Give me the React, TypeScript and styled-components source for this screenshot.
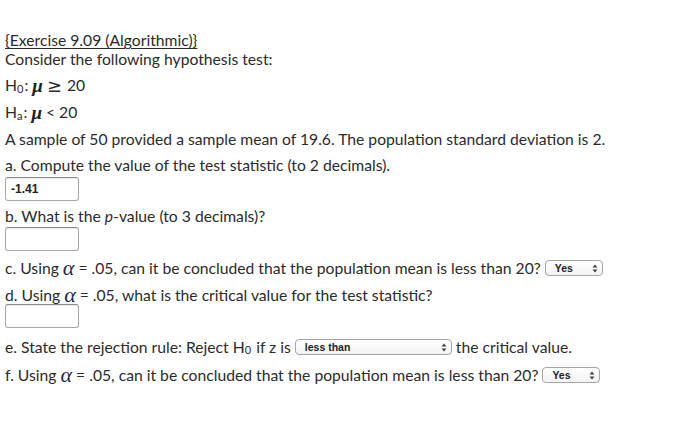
import React from "react";
import styled, { createGlobalStyle } from "styled-components";

const GlobalStyle = createGlobalStyle`
  html, body {
    margin: 0;
    padding: 0;
    background: #ffffff;
  }
`;

const Page = styled.div`
  padding: 31px 0 0 5px;
  font-family: Lato, "Liberation Sans", sans-serif;
  font-size: 15.7px;
  color: #2b2b2b;
  width: 676px;
`;

const Title = styled.div`
  line-height: 19px;
  text-decoration: underline;
  text-underline-offset: 2px;
  text-decoration-thickness: 1px;
`;

const Line = styled.div<{ $h: number; $mt?: number }>`
  height: ${(p) => p.$h}px;
  line-height: ${(p) => p.$h}px;
  margin-top: ${(p) => p.$mt ?? 0}px;
  display: flex;
  align-items: center;
  white-space: nowrap;
`;

const Sub = styled.span`
  font-size: 11px;
  position: relative;
  top: 3px;
  margin-right: 1px;
`;

const Greek = styled.span`
  font-family: "Liberation Serif", "DejaVu Serif", serif;
  font-style: italic;
  font-size: 19px;
  font-weight: bold;
  color: #222;
  margin: 0 4px;
`;

const Alpha = styled.span`
  font-family: "Liberation Serif", "DejaVu Serif", serif;
  font-style: italic;
  font-size: 22px;
  color: #1e2a4a;
  margin: 0 4px;
`;

const Geq = styled.span`
  font-family: "DejaVu Sans", sans-serif;
  font-size: 18px;
  margin-right: 5px;
`;

const Ital = styled.i``;

const AnswerBox = styled.div`
  width: 67px;
  height: 22px;
  border: 1px solid #a9a9a9;
  border-top-color: #8a8a8a;
  border-radius: 3px;
  box-shadow: inset 0 1px 1px rgba(0, 0, 0, 0.08);
  display: flex;
  align-items: center;
  padding-left: 5px;
  box-sizing: content-box;
  font-family: "Liberation Sans", Arial, sans-serif;
  font-weight: bold;
  font-size: 12px;
  color: #222;
`;

const BoxWrap = styled.div``;

const Select = styled.span<{ $w: number }>`
  display: inline-flex;
  align-items: center;
  justify-content: space-between;
  box-sizing: border-box;
  width: ${(p) => p.$w}px;
  height: 16px;
  margin-left: 4px;
  margin-right: 4px;
  padding: 0 4px 0 9px;
  border: 1px solid #a6a6a6;
  border-radius: 4px;
  background: linear-gradient(#ffffff, #f3f3f3);
  font-family: "Liberation Sans", Arial, sans-serif;
  font-weight: bold;
  font-size: 10.5px;
  line-height: 14px;
  color: #222;
`;

const Arrows = () => (
  <svg width="6" height="9" viewBox="0 0 6 9">
    <path d="M3 0.5 L5.5 3.5 L0.5 3.5 Z" fill="#444" />
    <path d="M3 8.5 L5.5 5.5 L0.5 5.5 Z" fill="#444" />
  </svg>
);

const Dropdown = ({ value, width }: { value: string; width: number }) => (
  <Select $w={width}>
    <span>{value}</span>
    <Arrows />
  </Select>
);

export default function App() {
  return (
    <>
      <GlobalStyle />
      <Page>
        <Title>{"{Exercise 9.09 (Algorithmic)}"}</Title>
        <Line $h={19}>Consider the following hypothesis test:</Line>
        <Line $h={27} $mt={3}>
          H<Sub>0</Sub>:<Greek>μ</Greek>
          <Geq>≥</Geq>20
        </Line>
        <Line $h={27}>
          H<Sub>a</Sub>:<Greek>μ</Greek>&lt; 20
        </Line>
        <Line $h={27}>
          A sample of 50 provided a sample mean of 19.6. The population standard deviation is 2.
        </Line>
        <Line $h={24}>a. Compute the value of the test statistic (to 2 decimals).</Line>
        <BoxWrap>
          <AnswerBox>-1.41</AnswerBox>
        </BoxWrap>
        <Line $h={22} $mt={4}>
          b. What is the&nbsp;<Ital>p</Ital>-value (to 3 decimals)?
        </Line>
        <BoxWrap>
          <AnswerBox />
        </BoxWrap>
        <Line $h={24} $mt={5}>
          c. Using<Alpha>α</Alpha>= .05, can it be concluded that the population mean is less than 20?
          <Dropdown value="Yes" width={58} />
        </Line>
        <Line $h={18} $mt={6}>
          d. Using<Alpha>α</Alpha>= .05, what is the critical value for the test statistic?
        </Line>
        <BoxWrap>
          <AnswerBox />
        </BoxWrap>
        <Line $h={24} $mt={7}>
          e. State the rejection rule: Reject H<Sub>0</Sub>&nbsp;if z is
          <Dropdown value="less than" width={157} />
          the critical value.
        </Line>
        <Line $h={24} $mt={4}>
          f. Using<Alpha>α</Alpha>= .05, can it be concluded that the population mean is less than 20?
          <Dropdown value="Yes" width={58} />
        </Line>
      </Page>
    </>
  );
}
